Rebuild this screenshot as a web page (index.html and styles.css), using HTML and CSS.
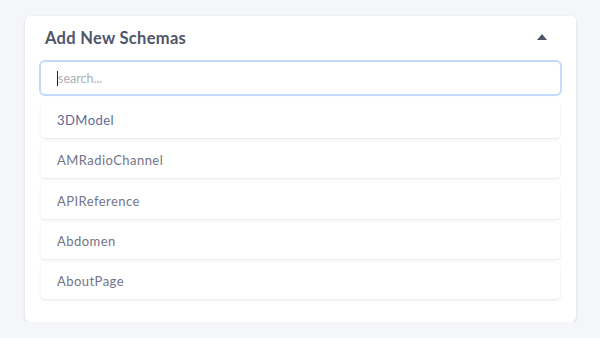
FILE: index.html
```html
<!DOCTYPE html>
<html>
<head>
<meta charset="utf-8">
<link rel="stylesheet" href="styles.css">
</head>
<body>
<div class="card">
  <div class="header">
    <span class="title">Add New Schemas</span>
    <span class="caret"></span>
  </div>
  <div class="search">
    <span class="cursor"></span><span class="placeholder">search...</span>
  </div>
  <ul class="list">
    <li class="item active">3DModel</li>
    <li class="item">AMRadioChannel</li>
    <li class="item">APIReference</li>
    <li class="item">Abdomen</li>
    <li class="item">AboutPage</li>
  </ul>
</div>
</body>
</html>
```
FILE: styles.css
```css
html, body {
  margin: 0;
  padding: 0;
  background: #f5f6fa;
  font-family: "Lato", "Noto Sans", sans-serif;
}
.card {
  margin: 16px 0 0 25px;
  width: 551px;
  box-sizing: border-box;
  background: #ffffff;
  border-radius: 5px;
  box-shadow: 0 1px 3px rgba(0, 0, 0, 0.14);
  padding: 0 14px 23px 14px;
}
.header {
  height: 44px;
  display: flex;
  align-items: center;
  justify-content: space-between;
  padding: 0 15px 0 6px;
}
.title {
  font-size: 16.5px;
  font-weight: 700;
  color: #4f566b;
  letter-spacing: 0.3px;
}
.caret {
  width: 0;
  height: 0;
  border-left: 5px solid transparent;
  border-right: 5px solid transparent;
  border-bottom: 6px solid #4f566b;
  margin-top: -2px;
}
.search {
  height: 36px;
  box-sizing: border-box;
  border: 2px solid #c3dafc;
  border-radius: 6px;
  display: flex;
  align-items: center;
  padding-left: 16px;
  margin-bottom: 6px;
}
.cursor {
  width: 1px;
  height: 15px;
  background: #222;
}
.placeholder {
  font-size: 12.5px;
  color: #adafb8;
}
.list {
  list-style: none;
  margin: 0 2px;
  padding: 0;
  display: flex;
  flex-direction: column;
  gap: 4.25px;
}
.item {
  height: 36px;
  display: flex;
  align-items: center;
  padding-left: 16px;
  border-radius: 4px;
  background: #fff;
  box-shadow: 0 1px 3px rgba(0, 0, 0, 0.10);
  font-size: 13px;
  letter-spacing: 0.45px;
  color: #72748a;
}
.item.active {
  color: #5b6a96;
}
```
